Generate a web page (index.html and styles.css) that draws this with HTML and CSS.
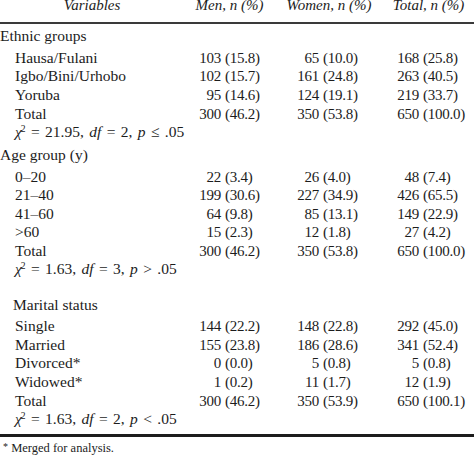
FILE: index.html
```html
<!DOCTYPE html>
<html lang="en">
<head>
    <meta charset="UTF-8">
    <meta name="viewport" content="width=device-width, initial-scale=1.0">
    <title>Respondents by sex</title>
    <link rel="stylesheet" href="styles.css">
</head>
<body>

<table class="stats">
    <colgroup>
        <col class="c-label">
        <col class="c-men-n"><col class="c-men-p">
        <col class="c-women-n"><col class="c-women-p">
        <col class="c-total-n"><col class="c-total-p">
    </colgroup>
    <thead>
        <tr>
            <th>Variables</th>
            <th colspan="2">Men, n (%)</th>
            <th colspan="2">Women, n (%)</th>
            <th colspan="2">Total, n (%)</th>
        </tr>
    </thead>
    <tbody>
        <!-- Ethnic groups -->
        <tr class="group first"><td colspan="7">Ethnic groups</td></tr>
        <tr class="item">
            <td>Hausa/Fulani</td>
            <td class="n">103</td><td class="p">(15.8)</td>
            <td class="n">65</td><td class="p">(10.0)</td>
            <td class="n">168</td><td class="p">(25.8)</td>
        </tr>
        <tr class="item">
            <td>Igbo/Bini/Urhobo</td>
            <td class="n">102</td><td class="p">(15.7)</td>
            <td class="n">161</td><td class="p">(24.8)</td>
            <td class="n">263</td><td class="p">(40.5)</td>
        </tr>
        <tr class="item">
            <td>Yoruba</td>
            <td class="n">95</td><td class="p">(14.6)</td>
            <td class="n">124</td><td class="p">(19.1)</td>
            <td class="n">219</td><td class="p">(33.7)</td>
        </tr>
        <tr class="item">
            <td>Total</td>
            <td class="n">300</td><td class="p">(46.2)</td>
            <td class="n">350</td><td class="p">(53.8)</td>
            <td class="n">650</td><td class="p">(100.0)</td>
        </tr>
        <tr class="stat">
            <td colspan="7"><i>&chi;</i><sup>2</sup> = 21.95, <i>df</i> = 2, <i>p</i> &le; .05</td>
        </tr>

        <!-- Age group -->
        <tr class="group"><td colspan="7">Age group (y)</td></tr>
        <tr class="item">
            <td>0&ndash;20</td>
            <td class="n">22</td><td class="p">(3.4)</td>
            <td class="n">26</td><td class="p">(4.0)</td>
            <td class="n">48</td><td class="p">(7.4)</td>
        </tr>
        <tr class="item">
            <td>21&ndash;40</td>
            <td class="n">199</td><td class="p">(30.6)</td>
            <td class="n">227</td><td class="p">(34.9)</td>
            <td class="n">426</td><td class="p">(65.5)</td>
        </tr>
        <tr class="item">
            <td>41&ndash;60</td>
            <td class="n">64</td><td class="p">(9.8)</td>
            <td class="n">85</td><td class="p">(13.1)</td>
            <td class="n">149</td><td class="p">(22.9)</td>
        </tr>
        <tr class="item">
            <td>&gt;60</td>
            <td class="n">15</td><td class="p">(2.3)</td>
            <td class="n">12</td><td class="p">(1.8)</td>
            <td class="n">27</td><td class="p">(4.2)</td>
        </tr>
        <tr class="item">
            <td>Total</td>
            <td class="n">300</td><td class="p">(46.2)</td>
            <td class="n">350</td><td class="p">(53.8)</td>
            <td class="n">650</td><td class="p">(100.0)</td>
        </tr>
        <tr class="stat">
            <td colspan="7"><i>&chi;</i><sup>2</sup> = 1.63, <i>df</i> = 3, <i>p</i> &gt; .05</td>
        </tr>

        <!-- Marital status -->
        <tr class="group spaced"><td colspan="7">Marital status</td></tr>
        <tr class="item">
            <td>Single</td>
            <td class="n">144</td><td class="p">(22.2)</td>
            <td class="n">148</td><td class="p">(22.8)</td>
            <td class="n">292</td><td class="p">(45.0)</td>
        </tr>
        <tr class="item">
            <td>Married</td>
            <td class="n">155</td><td class="p">(23.8)</td>
            <td class="n">186</td><td class="p">(28.6)</td>
            <td class="n">341</td><td class="p">(52.4)</td>
        </tr>
        <tr class="item">
            <td>Divorced*</td>
            <td class="n">0</td><td class="p">(0.0)</td>
            <td class="n">5</td><td class="p">(0.8)</td>
            <td class="n">5</td><td class="p">(0.8)</td>
        </tr>
        <tr class="item">
            <td>Widowed*</td>
            <td class="n">1</td><td class="p">(0.2)</td>
            <td class="n">11</td><td class="p">(1.7)</td>
            <td class="n">12</td><td class="p">(1.9)</td>
        </tr>
        <tr class="item">
            <td>Total</td>
            <td class="n">300</td><td class="p">(46.2)</td>
            <td class="n">350</td><td class="p">(53.9)</td>
            <td class="n">650</td><td class="p">(100.1)</td>
        </tr>
        <tr class="stat last">
            <td colspan="7"><i>&chi;</i><sup>2</sup> = 1.63, <i>df</i> = 2, <i>p</i> &lt; .05</td>
        </tr>
    </tbody>
</table>

<p class="footnote"><span class="mark">*</span> Merged for analysis.</p>

</body>
</html>
```

FILE: styles.css
```css
/* Global styles */
body {
    margin: 0;
    padding: 0;
    background-color: #fff;
    color: #1c1c1c;
    font-family: "Liberation Serif", "Times New Roman", serif;
    font-size: 15.5px;
    line-height: 18.6px;
    overflow: hidden;
}
.stats {
    width: 474px;
    margin-top: -4px;
    border-collapse: collapse;
    table-layout: fixed;
}
.c-label { width: 184px; }
.c-men-n { width: 37px; }
.c-men-p { width: 54px; }
.c-women-n { width: 44px; }
.c-women-p { width: 64px; }
.c-total-n { width: 36px; }
.c-total-p { width: 55px; }

.stats th {
    font-size: 15px;
    font-style: italic;
    font-weight: normal;
    text-align: center;
    padding: 0 0 7px 0;
    border-bottom: 2px solid #3a3a3a;
    white-space: nowrap;
}
.stats td {
    padding: 0;
    white-space: nowrap;
}

/* Group headings */
.group td {
    padding-top: 3.7px;
    padding-bottom: 3.4px;
}
.group.first td {
    padding-top: 3px;
    padding-bottom: 3.7px;
}
.group.spaced td {
    padding-top: 16.5px;
    padding-left: 13px;
    padding-bottom: 3px;
}

/* Data rows */
.item td:first-child {
    padding-left: 15px;
}
.item .n {
    font-size: 15px;
    text-align: right;
    letter-spacing: -0.25px;
}
.item .p {
    font-size: 15px;
    text-align: left;
    padding-left: 4px;
    letter-spacing: -0.25px;
}

/* Chi-square lines */
.stat td {
    padding-left: 15px;
    word-spacing: 1.5px;
}
.stat sup {
    font-size: 0.62em;
    line-height: 0;
    vertical-align: 0.55em;
    margin-left: -1px;
}
.stat.last td {
    padding-bottom: 5px;
    border-bottom: 3px solid #1c1c1c;
}

.footnote {
    margin: 2.5px 0 0 3px;
    font-size: 12.5px;
    line-height: 16px;
}
.footnote .mark {
    font-size: 0.8em;
    vertical-align: 0.15em;
}
```
